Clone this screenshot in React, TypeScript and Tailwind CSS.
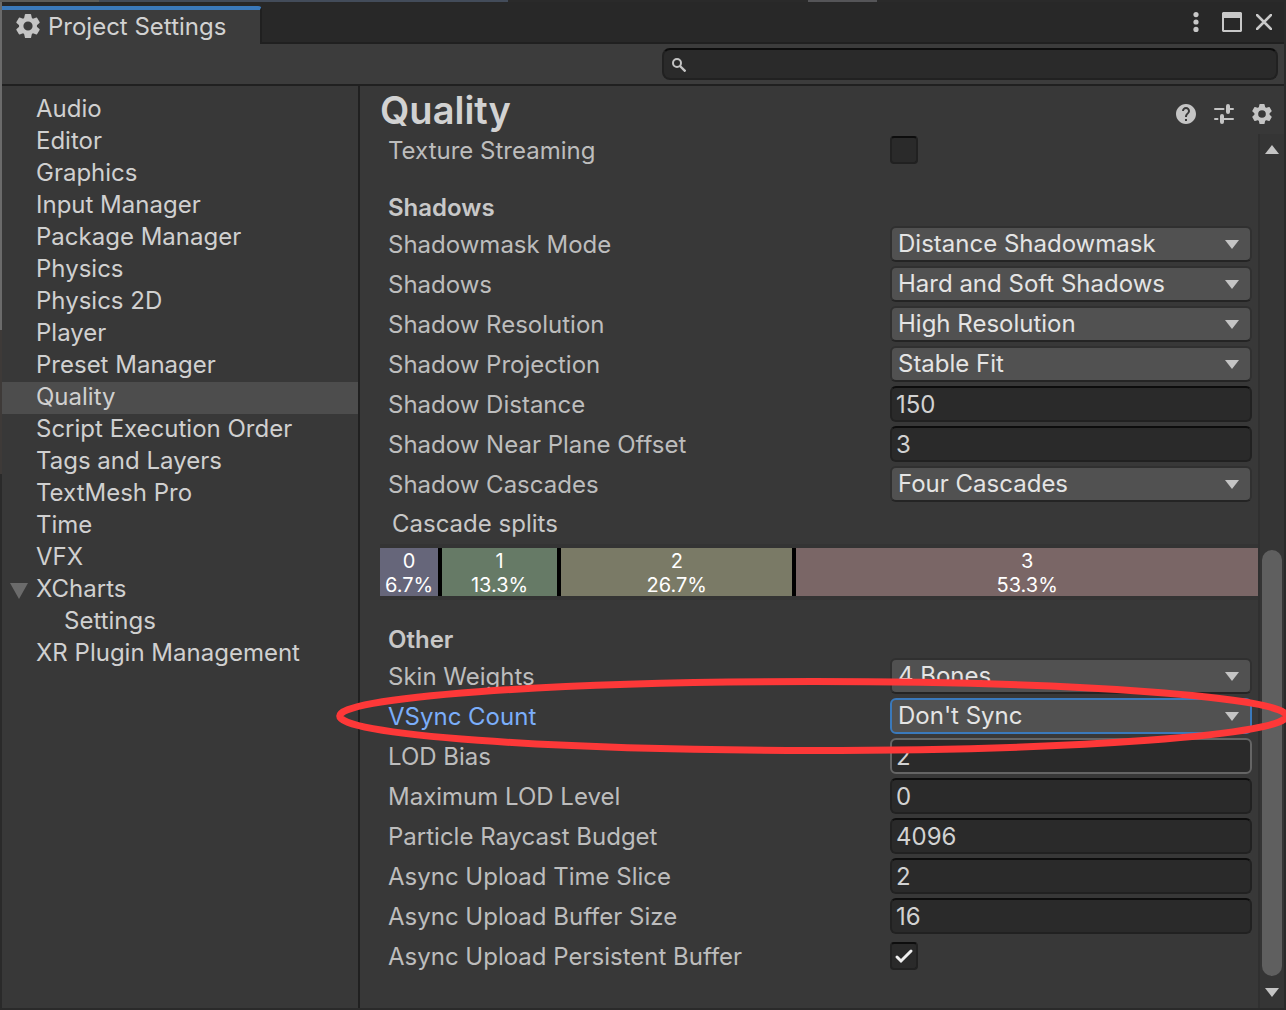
import { useId, type ReactNode } from "react";
import { MdHelp } from "react-icons/md";
import { clsx } from "clsx";

const pages = [
  { name: "Audio" },
  { name: "Editor" },
  { name: "Graphics" },
  { name: "Input Manager" },
  { name: "Package Manager" },
  { name: "Physics" },
  { name: "Physics 2D" },
  { name: "Player" },
  { name: "Preset Manager" },
  { name: "Quality", active: true },
  { name: "Script Execution Order" },
  { name: "Tags and Layers" },
  { name: "TextMesh Pro" },
  { name: "Time" },
  { name: "VFX" },
  { name: "XCharts", open: true },
  { name: "Settings", child: true },
  { name: "XR Plugin Management" },
];

const cascades = [
  { share: 6.7, color: "bg-[#66667a]" },
  { share: 13.3, color: "bg-[#667a66]" },
  { share: 26.7, color: "bg-[#7a7a66]" },
  { share: 53.3, color: "bg-[#7a6666]" },
];

const sunken = "border-2 border-[#212121] border-t-[#0d0d0d] bg-[#2a2a2a]";

function Gear({ className }: { className?: string }) {
  return (
    <svg viewBox="-12 -12 24 24" className={className} fill="currentColor" aria-hidden>
      <circle r="6.8" fill="none" stroke="currentColor" strokeWidth="4.4" />
      {[0, 60, 120, 180, 240, 300].map((a) => (
        <path key={a} d="M-2.4-12h4.8q.6 0 .7.6L4-7.2h-8l.9-4.2q.1-.6.7-.6z" transform={`rotate(${a})`} />
      ))}
    </svg>
  );
}

function Sliders() {
  return (
    <svg viewBox="0 0 20 20" className="size-5" stroke="currentColor" strokeLinecap="round" aria-hidden>
      <path d="M1 5h8.500M15 5h4M1 15h2.500M10 15h9" strokeWidth="2" />
      <path d="M14 2v6M8 12v6" strokeWidth="4" />
    </svg>
  );
}

function Arrow({ up, className }: { up?: boolean; className?: string }) {
  return (
    <svg viewBox="0 0 14 9" className={clsx("h-[9px] w-3.5 fill-[#c4c4c4]", className)} aria-hidden>
      <path d={up ? "M0 9h14L7 0z" : "M0 0h14L7 9z"} />
    </svg>
  );
}

function Row({ label, active, children }: { label: string; active?: boolean; children: (id: string) => ReactNode }) {
  const id = useId();
  return (
    <div className="relative grid h-9 grid-cols-[502fr_362fr] items-center">
      <label htmlFor={id} className={clsx("pt-0.5", active ? "text-[#7baefa]" : "text-[#bdbdbd]")}>
        {label}
      </label>
      {children(id)}
      {active && <Highlight />}
    </div>
  );
}

// hand-drawn style ring around the active row
function Highlight() {
  return (
    <svg
      className="pointer-events-none absolute -top-6 -right-[42px] -left-14 z-10 h-[84px] w-[calc(100%+98px)]"
      fill="none"
      aria-hidden
    >
      <ellipse cx="50%" cy="50%" rx="49.2%" ry="41%" stroke="#fd3838" strokeWidth="7" />
    </svg>
  );
}

function SelectRow({ label, value, active }: { label: string; value: string; active?: boolean }) {
  return (
    <Row label={label} active={active}>
      {(id) => (
        <div className="relative">
          <select
            id={id}
            className={clsx(
              "block h-9 w-full appearance-none rounded-md border-2 bg-[#515151] pr-8 pb-0.5 pl-1.5 text-[#e4e4e4] outline-none",
              active ? "border-[#3a79bb]" : "border-[#303030] border-b-[#242424]",
            )}
          >
            <option>{value}</option>
          </select>
          <Arrow className="pointer-events-none absolute top-3.5 right-[13px]" />
        </div>
      )}
    </Row>
  );
}

function InputRow({ label, value, hover }: { label: string; value: string; hover?: boolean }) {
  return (
    <Row label={label}>
      {(id) => (
        <input
          id={id}
          type="text"
          defaultValue={value}
          className={clsx(
            "block h-9 w-full min-w-0 rounded-md px-1 text-[#d2d2d2] outline-none",
            hover ? "border-2 border-[#656565] bg-[#2a2a2a]" : sunken,
          )}
        />
      )}
    </Row>
  );
}

function CheckRow({ label, checked }: { label: string; checked?: boolean }) {
  return (
    <Row label={label}>
      {(id) => (
        <div className="relative size-7">
          <input
            id={id}
            type="checkbox"
            defaultChecked={checked}
            className={clsx("peer block size-7 appearance-none rounded", sunken)}
          />
          <svg
            viewBox="0 0 28 28"
            className="pointer-events-none absolute inset-0 hidden size-7 peer-checked:block"
            fill="none"
            stroke="#f0f0f0"
            strokeWidth="3"
            strokeLinecap="round"
            aria-hidden
          >
            <path d="M7 15l4 4L21 9" />
          </svg>
        </div>
      )}
    </Row>
  );
}

function Sidebar() {
  return (
    <nav className="w-[358px] shrink-0 border-r-2 border-[#202020] pt-2 text-[#d0d0d0]">
      {pages.map((p) => (
        <a
          key={p.name}
          href="#"
          className={clsx("flex h-8 items-center", p.active && "bg-[#4d4d4d]", p.child ? "pl-[62px]" : "pl-2")}
        >
          {!p.child && (
            <span className="w-[26px] shrink-0">
              {p.open && (
                <svg viewBox="0 0 18 16" className="mt-0.5 h-4 w-[18px] fill-[#6b6b6b]" aria-hidden>
                  <path d="M0 0h18L9 16z" />
                </svg>
              )}
            </span>
          )}
          <span className="pb-0.5">{p.name}</span>
        </a>
      ))}
    </nav>
  );
}

function Cascades() {
  return (
    <div className="border-y-4 border-[#343434]">
      <div className="flex h-12 gap-1 bg-black">
        {cascades.map((c, i) => (
          <div
            key={i}
            className={clsx("flex basis-0 flex-col items-center text-xl/6 text-white", c.color)}
            style={{ flexGrow: c.share }}
          >
            <span className="h-6 pt-px">{i}</span>
            <span className="h-6 pt-px">{c.share}%</span>
          </div>
        ))}
      </div>
    </div>
  );
}

function QualityPanel() {
  return (
    <main className="flex min-w-0 flex-1 flex-col">
      <header className="flex h-12 items-center justify-between pr-3 pl-5">
        <h1 className="text-[38px]/12 font-semibold text-[#d2d2d2]">Quality</h1>
        <div className="mt-2 flex gap-[18px] text-[#c4c4c4]">
          <button aria-label="Help" className="flex size-5 items-center justify-center">
            <MdHelp className="size-6 shrink-0" />
          </button>
          <button aria-label="Presets">
            <Sliders />
          </button>
          <button aria-label="Options">
            <Gear className="size-5" />
          </button>
        </div>
      </header>
      <div className="flex flex-1">
        <div className="min-w-0 flex-1">
          <section className="-mt-0.5 pr-1.5 pl-7">
            <CheckRow label="Texture Streaming" />
          </section>
          <section className="mt-[22px] pr-1.5 pl-7">
            <h2 className="h-9 leading-9 font-semibold text-[#c8c8c8]">Shadows</h2>
            <div className="flex flex-col gap-1">
              <SelectRow label="Shadowmask Mode" value="Distance Shadowmask" />
              <SelectRow label="Shadows" value="Hard and Soft Shadows" />
              <SelectRow label="Shadow Resolution" value="High Resolution" />
              <SelectRow label="Shadow Projection" value="Stable Fit" />
              <InputRow label="Shadow Distance" value="150" />
              <InputRow label="Shadow Near Plane Offset" value="3" />
              <SelectRow label="Shadow Cascades" value="Four Cascades" />
            </div>
          </section>
          <section className="pl-5">
            <h3 className="h-[42px] pl-3 leading-[44px] text-[#c8c8c8]">Cascade splits</h3>
            <Cascades />
          </section>
          <section className="mt-[22px] pr-1.5 pl-7">
            <h2 className="h-9 leading-9 font-semibold text-[#c8c8c8]">Other</h2>
            <div className="flex flex-col gap-1">
              <SelectRow label="Skin Weights" value="4 Bones" />
              <SelectRow label="VSync Count" value="Don't Sync" active />
              <InputRow label="LOD Bias" value="2" hover />
              <InputRow label="Maximum LOD Level" value="0" />
              <InputRow label="Particle Raycast Budget" value="4096" />
              <InputRow label="Async Upload Time Slice" value="2" />
              <InputRow label="Async Upload Buffer Size" value="16" />
              <CheckRow label="Async Upload Persistent Buffer" checked />
            </div>
          </section>
        </div>
        <div className="flex w-[26px] flex-col items-center border-l-2 border-[#303030] bg-[#353535]">
          <button aria-label="Scroll up" className="flex h-8 items-center pb-0.5">
            <Arrow up />
          </button>
          <div className="grid w-5 flex-1 grid-rows-[384fr_426fr]">
            <div className="row-start-2 rounded-full bg-[#5f5f5f]" />
          </div>
          <button aria-label="Scroll down" className="flex h-8 items-center">
            <Arrow />
          </button>
        </div>
      </div>
    </main>
  );
}

function TitleBar() {
  return (
    <div className="flex h-[42px] bg-[#282828]">
      <div className="mt-1 flex w-[260px] items-center gap-2 rounded-tr border-t-4 border-r-2 border-t-[#3a79bb] border-r-[#202020] bg-[#3c3c3c] pl-3.5">
        <Gear className="mb-0.5 size-6 text-[#c4c4c4]" />
        <span className="text-[#d2d2d2]">Project Settings</span>
      </div>
      <div className="flex flex-1 items-center justify-end border-b-2 border-[#202020] pr-3 text-[#c8c8c8]">
        <button aria-label="Menu" className="mr-5">
          <svg viewBox="0 0 12 20" className="h-5 w-3" fill="currentColor" aria-hidden>
            <circle cx="6" cy="2.600" r="2.600" />
            <circle cx="6" cy="10" r="2.600" />
            <circle cx="6" cy="17.400" r="2.600" />
          </svg>
        </button>
        <button aria-label="Maximize" className="mr-3.5">
          <svg viewBox="0 0 20 20" className="size-5" fill="currentColor" aria-hidden>
            <path fillRule="evenodd" d="M1 0h18l1 1v18l-1 1H1l-1-1V1zM2 6v12h16V6z" />
          </svg>
        </button>
        <button aria-label="Close">
          <svg viewBox="0 0 16 16" className="size-4" stroke="currentColor" strokeWidth="2.500" strokeLinecap="round" aria-hidden>
            <path d="M1 1l14 14M15 1L1 15" />
          </svg>
        </button>
      </div>
    </div>
  );
}

export default function App() {
  return (
    <div className="flex min-h-screen flex-col overflow-hidden bg-[#2a2a2a] font-['Inter',sans-serif] text-2xl/8">
      <div className="flex h-0.5">
        <div className="w-[99px] bg-[#5c5c5a]" />
        <div className="w-[409px] bg-[#434c5a]" />
        <div className="w-[300px]" />
        <div className="w-[69px] bg-[#555558]" />
      </div>
      <div className="flex flex-1">
        <div className="flex w-0.5 flex-col">
          <div className="h-[328px] bg-[#6b6b6b]" />
          <div className="h-36 bg-[#3e3a38]" />
        </div>
        <div className="flex min-w-0 flex-1 flex-col bg-[#383838]">
          <TitleBar />
          <div className="grid h-[42px] grid-cols-[660fr_616fr] border-b-2 border-[#202020] bg-[#3c3c3c] py-1 pr-1.5">
            <label className={clsx("col-start-2 flex min-w-0 items-center gap-2 rounded-lg pl-2", sunken)}>
              <svg viewBox="0 0 14 14" className="mt-0.5 size-3.5 shrink-0" fill="none" stroke="#c4c4c4" strokeWidth="2" aria-hidden>
                <circle cx="5" cy="5" r="4" />
                <path d="M8 8l5.500 5.500" strokeWidth="2.400" />
              </svg>
              <input type="search" aria-label="Search settings" className="h-7 min-w-0 flex-1 bg-transparent text-[#d2d2d2] outline-none" />
            </label>
          </div>
          <div className="flex flex-1">
            <Sidebar />
            <QualityPanel />
          </div>
        </div>
        <div className="w-0.5" />
      </div>
      <div className="h-0.5" />
    </div>
  );
}
